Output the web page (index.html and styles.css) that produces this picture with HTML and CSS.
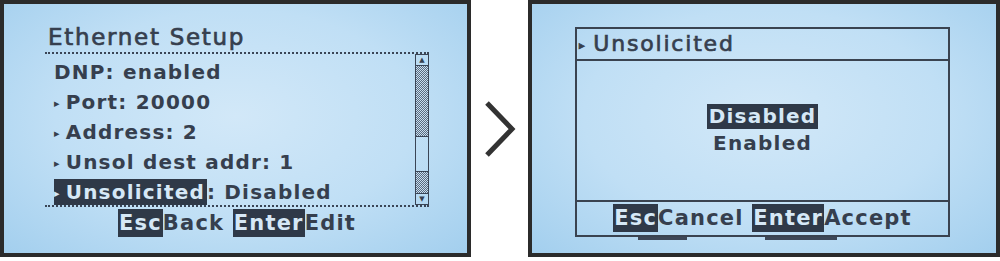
FILE: index.html
```html
<!DOCTYPE html>
<html lang="en">
<head>
    <meta charset="UTF-8">
    <title>Ethernet Setup - Unsolicited</title>
    <link rel="stylesheet" href="styles.css">
</head>
<body>
    <div class="page">
        <!-- first screen: the setup menu -->
        <div class="screen screen-menu">
            <div class="lcd">
                <div class="title">Ethernet Setup</div>
                <div class="menu">
                    <div class="rows">
                        <div class="row">DNP: enabled</div>
                        <div class="row"><span class="caret">&#9656;</span>Port: 20000</div>
                        <div class="row"><span class="caret">&#9656;</span>Address: 2</div>
                        <div class="row"><span class="caret">&#9656;</span>Unsol dest addr: 1</div>
                        <div class="row"><span class="sel"><span class="caret">&#9656;</span>Unsolicited</span>: Disabled</div>
                    </div>
                    <div class="scroll">
                        <div class="scroll-btn">&#9650;</div>
                        <div class="thumb thumb-top"></div>
                        <div class="track"></div>
                        <div class="thumb thumb-bottom"></div>
                        <div class="scroll-btn">&#9660;</div>
                    </div>
                </div>
                <div class="keys">
                    <span class="key">Esc</span>Back <span class="key">Enter</span>Edit
                </div>
            </div>
        </div>

        <div class="next">
            <svg width="32" height="58" viewBox="0 0 32 58">
                <polyline points="3,3 28,29 3,55" fill="none" stroke="#333" stroke-width="5"/>
            </svg>
        </div>

        <!-- second screen: the option picker -->
        <div class="screen screen-pick">
            <div class="dialog">
                <div class="dialog-head"><span class="caret">&#9656;</span>Unsolicited</div>
                <div class="dialog-body">
                    <div class="option sel">Disabled</div>
                    <div class="option">Enabled</div>
                </div>
                <div class="keys dialog-keys">
                    <span class="key">Esc</span>Cancel <span class="key">Enter</span>Accept
                </div>
            </div>
            <div class="tabs">
                <span class="tab tab-esc"></span>
                <span class="tab tab-enter"></span>
            </div>
        </div>
    </div>
</body>
</html>
```

FILE: styles.css
```css
body {
    margin: 0;
    background: #fff;
    font-family: 'DejaVu Sans', sans-serif;
    font-weight: bold;
    color: #363f4e;
}

.page {
    display: flex;
    width: 1000px;
    height: 257px;
}

.screen {
    box-sizing: border-box;
    height: 257px;
    border: 4px solid #2b2b2b;
    background: radial-gradient(ellipse at 50% 45%, #d2e8f8 0%, #c0dff5 55%, #a3cfee 100%);
}

.screen-menu {
    width: 471px;
    padding: 18px 0 0 41px;
}

.screen-pick {
    width: 472px;
    padding: 23px 0 0 43px;
}

.next {
    flex: 1;
    display: flex;
    align-items: center;
    justify-content: center;
}

.lcd {
    width: 384px;
}

.title {
    height: 30px;
    line-height: 30px;
    padding-left: 3px;
    font-size: 23px;
    font-weight: normal;
    letter-spacing: 1.7px;
    -webkit-text-stroke: 0.7px #363f4e;
}

.menu {
    display: flex;
    height: 151px;
    border-top: 2px dotted #3a4556;
    border-bottom: 2px dotted #3a4556;
}

.rows {
    flex: 1;
    padding-top: 3px;
}

.row {
    height: 30px;
    line-height: 30px;
    padding-left: 9px;
    font-size: 20px;
    letter-spacing: 1.2px;
    white-space: nowrap;
}

.caret {
    font-size: 11px;
    margin-right: 5px;
    vertical-align: 2px;
}

.sel {
    background: #2f3948;
    color: #d6e8f6;
    padding: 1px 2px 1px 0;
}

.scroll {
    box-sizing: border-box;
    width: 14px;
    border: 1px solid #3a4556;
    display: flex;
    flex-direction: column;
}

.scroll-btn {
    height: 10px;
    font-size: 7px;
    line-height: 10px;
    text-align: center;
}

.thumb {
    background: repeating-conic-gradient(#5a6a7e 0 25%, #c8def0 0 50%) 0 0 / 2px 2px;
    border-top: 1px solid #3a4556;
    border-bottom: 1px solid #3a4556;
}

.thumb-top {
    height: 72px;
}

.track {
    height: 35px;
}

.thumb-bottom {
    height: 21px;
}

.keys {
    text-align: center;
    font-size: 21px;
    letter-spacing: 1.2px;
    line-height: 33px;
    white-space: nowrap;
}

.key {
    background: #2f3948;
    color: #d6e8f6;
    padding: 2px 1px;
}

.dialog {
    box-sizing: border-box;
    width: 375px;
    height: 210px;
    border: 2px solid #3a4350;
    display: flex;
    flex-direction: column;
}

.dialog-head {
    height: 30px;
    line-height: 30px;
    padding-left: 2px;
    font-size: 22px;
    font-weight: normal;
    letter-spacing: 1.8px;
    -webkit-text-stroke: 0.7px #363f4e;
    border-bottom: 2px solid #3a4350;
}

.dialog-head .caret {
    margin-right: 7px;
}

.dialog-body {
    flex: 1;
    display: flex;
    flex-direction: column;
    align-items: center;
    justify-content: center;
    font-size: 20px;
    letter-spacing: 1.2px;
    padding-bottom: 2px;
}

.option {
    line-height: 25px;
}

.option.sel {
    padding: 0 2px;
    margin-bottom: 2px;
}

.dialog-keys {
    height: 33px;
    border-top: 2px solid #3a4350;
}

.tabs {
    display: flex;
    height: 3px;
}

.tab {
    height: 3px;
    background: #3d4757;
}

.tab-esc {
    width: 49px;
    margin-left: 63px;
}

.tab-enter {
    width: 72px;
    margin-left: 78px;
}
```
